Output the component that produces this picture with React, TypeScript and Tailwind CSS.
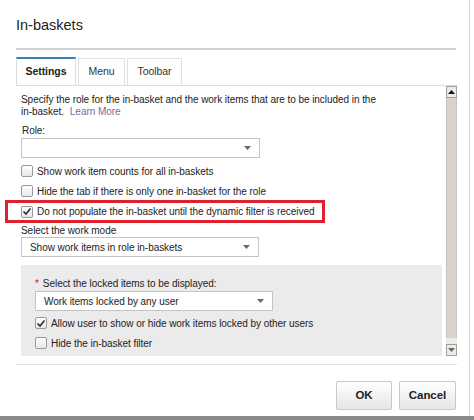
const Checkbox = ({ checked }: { checked?: boolean }) => (
  <span className="flex h-[12px] w-[12px] shrink-0 items-center justify-center rounded-[2px] border border-[#9a9a9a] bg-gradient-to-b from-white to-[#e8e8e8]">
    {checked ? (
      <svg width="10" height="9" viewBox="0 0 10 9">
        <path d="M1.5 4.5 L4 7 L8.5 1.5" fill="none" stroke="#333" strokeWidth="1.7" />
      </svg>
    ) : null}
  </span>
);

const Caret = () => (
  <svg width="7" height="4" viewBox="0 0 7 4">
    <path d="M0 0 H7 L3.5 4 Z" fill="#666" />
  </svg>
);

const Select = ({ value, width }: { value?: string; width: string }) => (
  <div
    className={`flex h-[20px] items-center justify-between border border-[#c4c4c4] bg-white pl-[8px] pr-[8px] ${width}`}
  >
    <span>{value}</span>
    <Caret />
  </div>
);

const CheckRow = ({ checked, label }: { checked?: boolean; label: string }) => (
  <div className="flex h-[20px] items-center gap-[4px] whitespace-nowrap">
    <Checkbox checked={checked} />
    <span>{label}</span>
  </div>
);

const App = () => {
  return (
    <div
      className="relative h-[420px] w-[474px] overflow-hidden bg-white text-[10px] tracking-[-0.05px] text-[#222]"
      style={{ fontFamily: '"Liberation Sans", Arial, sans-serif' }}
    >
      <div className="flex h-[416px] w-[470px] flex-col border-r-[1px] border-[#d8d8d8]">
        <div className="px-4 pt-[15px]">
          <h1 className="h-[20px] text-[14.5px] leading-[20px] tracking-normal text-[#222]">In-baskets</h1>
          <div className="mt-[13px] h-[2px] w-[440px] bg-[#cfcfcf]" />
        </div>

        {/* tabs */}
        <div className="ml-4 mt-[8px] flex h-[28px] w-[441px] items-end gap-[2px] border-b border-[#dcdcdc]">
          <div className="flex h-[28px] w-[60px] items-center justify-center border-x border-t-2 border-[#dcdcdc] border-t-[#3c7fb1] bg-white text-[10.5px] font-bold">
            Settings
          </div>
          <div className="flex h-[27px] w-[47px] items-center justify-center border-x border-t border-[#e0e0e0] text-[10.5px] text-[#333]">
            Menu
          </div>
          <div className="flex h-[27px] w-[55px] items-center justify-center border-x border-t border-[#e0e0e0] text-[10.5px] text-[#333]">
            Toolbar
          </div>
        </div>

        {/* scroll content */}
        <div className="ml-4 flex h-[270px] w-[441px]">
          <div className="flex flex-1 flex-col pl-[5px] pt-[8px]">
            <div className="leading-[12px]">Specify the role for the in-basket and the work items that are to be included in the</div>
            <div className="leading-[12px]">
              in-basket.<span className="ml-[6px] text-[#7a6a9a]">Learn More</span>
            </div>
            <div className="mt-[6px] pl-[1px] leading-[14px]">Role:</div>
            <Select width="w-[239px]" />
            <div className="mt-[3px]">
              <CheckRow label="Show work item counts for all in-baskets" />
            </div>
            <CheckRow label="Hide the tab if there is only one in-basket for the role" />
            <div className="-ml-[16px] -mt-[1px] flex h-[23px] w-[320px] items-center border-[3px] border-[#e0202c] pl-[13px]">
              <CheckRow checked label="Do not populate the in-basket until the dynamic filter is received" />
            </div>
            <div className="mt-[1px] leading-[13px]">Select the work mode</div>
            <Select value="Show work items in role in-baskets" width="w-[238px]" />
            <div className="mt-[8px] flex w-[421px] flex-1 flex-col bg-[#ebebeb] pl-[14px] pt-[12px]">
              <div className="leading-[13px]">
                <span className="text-[#d3202c]">*</span>
                <span className="ml-[4px]">Select the locked items to be displayed:</span>
              </div>
              <div className="mt-[1px]">
                <Select value="Work items locked by any user" width="w-[238px]" />
              </div>
              <div className="mt-[2px]">
                <CheckRow checked label="Allow user to show or hide work items locked by other users" />
              </div>
              <CheckRow label="Hide the in-basket filter" />
            </div>
          </div>

          {/* scrollbar */}
          <div className="ml-[4px] flex w-[12px] flex-col bg-[#d4d0c8]">
            <div className="flex h-[12px] items-center justify-center border border-[#a0a0a0] bg-[#ecebe6]">
              <svg width="7" height="4" viewBox="0 0 7 4">
                <path d="M0 4 H7 L3.5 0 Z" fill="#111" />
              </svg>
            </div>
            <div className="flex-1 border-x border-[#c8c4bc] bg-[#d8d4cc]" />
            <div className="h-[6px] bg-[#ecebe6]" />
            <div className="flex h-[12px] items-center justify-center border border-[#a0a0a0] bg-[#ecebe6]">
              <Caret />
            </div>
          </div>
        </div>

        <div className="ml-4 mt-[8px] h-[1px] w-[441px] bg-[#e2e2e2]" />

        <div className="ml-auto mr-[13px] mt-[16px] flex gap-[7px] font-bold">
          <button className="flex h-[29px] w-[56px] items-center justify-center rounded-[2px] border border-[#c8c8c8] bg-gradient-to-b from-white to-[#e6e6e6] text-[11.5px]">
            OK
          </button>
          <button className="flex h-[29px] w-[57px] items-center justify-center rounded-[2px] border border-[#c8c8c8] bg-gradient-to-b from-white to-[#e6e6e6] text-[11.5px]">
            Cancel
          </button>
        </div>
      </div>
      <div className="h-[4px] w-full bg-[#8a8a8a]" />
    </div>
  );
};

export default App;
